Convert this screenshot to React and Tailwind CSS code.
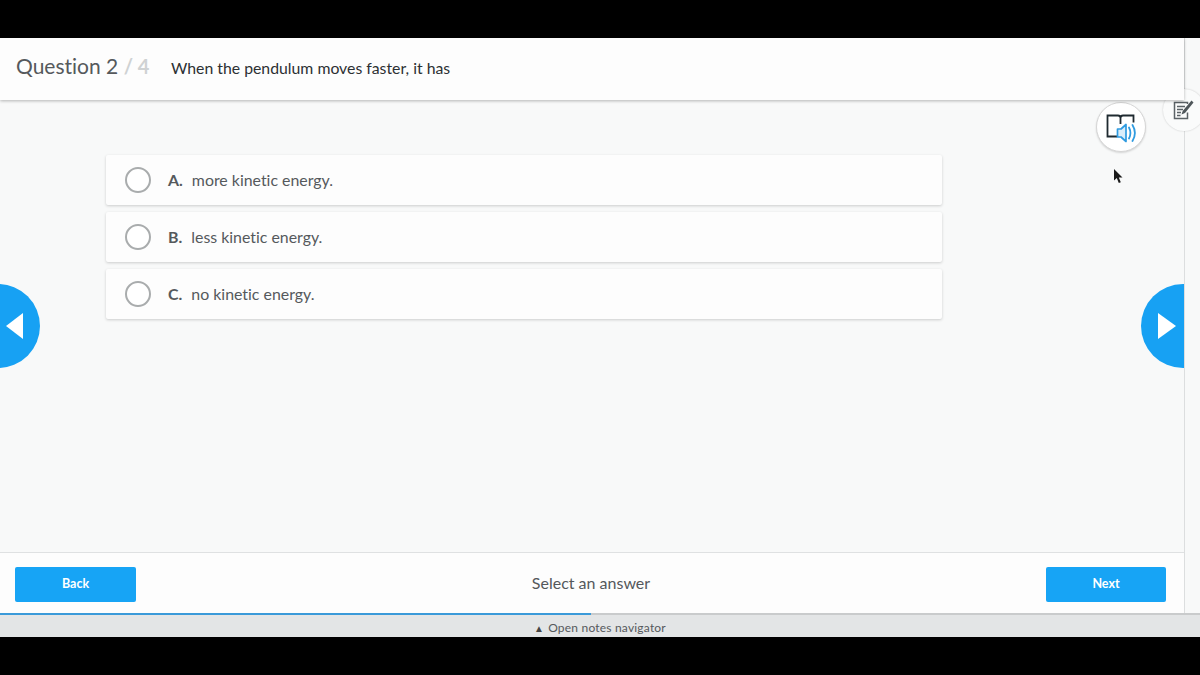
import React from 'react';

const options = [
  { letter: 'A.', text: 'more kinetic energy.' },
  { letter: 'B.', text: 'less kinetic energy.' },
  { letter: 'C.', text: 'no kinetic energy.' },
];

function BookAudioIcon() {
  return (
    <svg width="32" height="32" viewBox="0 0 32 32" fill="none">
      <path d="M12 25.500H2.500V4.500h10.500c1.300 0 2.500 1.200 2.500 2.500M15.500 7C15.500 5.500 16.500 4.500 18 4.500h10.500v7" stroke="#1f2a30" strokeWidth="1.800" />
      <path d="M15.500 7v6" stroke="#1f2a30" strokeWidth="1.800" />
      <path d="M12.500 18h3.500l5-4.500v17l-5-4.500h-3.500z" fill="#d9edfa" stroke="#2f9be0" strokeWidth="1.700" strokeLinejoin="round" />
      <path d="M24 16.500c1.800 3.500 1.800 7.500 0 11M27.500 14c3 5 3 11 0 16" stroke="#2f9be0" strokeWidth="1.800" strokeLinecap="round" />
    </svg>
  );
}

function NotesIcon() {
  return (
    <svg width="22" height="22" viewBox="0 0 22 22" fill="none">
      <path d="M15.500 5V3.500H2.500v16h13v-6" stroke="#5b6266" strokeWidth="1.500" />
      <path d="M5 7.500h8M5 10.500h6M5 13.500h4M5 16.500h3.500" stroke="#5b6266" strokeWidth="1.400" />
      <path d="M9.500 15.500l1.200-3.500L19.500 1.500l2 2-8.500 10.500z" fill="#4f565a" />
    </svg>
  );
}

export default function App() {
  return (
    <div className="relative h-[675px] w-[1200px] overflow-hidden bg-black font-['Lato',sans-serif] [font-variant-ligatures:none]">
      <div className="h-[38px]" />

      <div className="flex h-[575px]">
        <div className="flex w-[1184px] flex-col">
          <header className="z-10 flex h-[62px] items-center bg-[#fdfdfd] pl-[16px] shadow-[0_1px_3px_rgba(0,0,0,0.28)]">
            <h1 className="w-[155px] pb-[6px] text-[21px] text-[#55595c]">
              Question 2 <span className="text-[20px] font-bold text-[#cfd2d3]">/ 4</span>
            </h1>
            <p className="pb-[2px] text-[15.800px] text-[#2c3033]">When the pendulum moves faster, it has</p>
          </header>

          <main className="flex flex-1 flex-col gap-[7px] bg-[#f8f9f9] pl-[106px] pt-[55px]">
            {options.map((option) => (
              <div
                key={option.letter}
                className="flex h-[50px] w-[836px] items-center rounded-[2px] bg-[#fdfdfd] pl-[19px] text-[15.900px] text-[#55595c] shadow-[0_1px_3px_rgba(0,0,0,0.18)]"
              >
                <span className="h-[26px] w-[26px] rounded-full border-2 border-[#a9acad] bg-white" />
                <span className="ml-[17px] font-bold">{option.letter}</span>
                <span className="ml-[9px]">{option.text}</span>
              </div>
            ))}
          </main>

          <footer className="flex h-[61px] items-center justify-between border-t border-[#dfe1e2] bg-[#fdfdfd] pl-[15px] pr-[18px] pt-[2px]">
            <button className="h-[35px] w-[121px] rounded-[2px] bg-[#17a4f5] text-[12.500px] font-bold text-white">Back</button>
            <span className="pb-[3px] text-[16px] text-[#54585b]">Select an answer</span>
            <button className="h-[35px] w-[120px] rounded-[2px] bg-[#17a4f5] text-[12.500px] font-bold text-white">Next</button>
          </footer>
        </div>
        <div className="w-[16px] border-l border-[#dcdedf] bg-[#f8f9f9]" />
      </div>

      <div className="h-[24px] w-[1200px] bg-[#e3e5e6]">
        <div className="h-[2px] w-full bg-[#c9cbcc]">
          <div className="h-[2px] w-[591px] bg-[#3a9ad9]" />
        </div>
        <div className="flex h-[22px] items-center justify-center gap-[4px] pt-[4px] text-[12px] tracking-[0.2px] text-[#55595c]">
          <span className="text-[10px] text-[#444]">▲</span>
          <span>Open notes navigator</span>
        </div>
      </div>

      <div className="absolute left-[-44px] top-[284px] flex h-[84px] w-[84px] items-center justify-end rounded-full bg-[#17a1f3] pr-[17px]">
        <span className="h-0 w-0 border-y-[13px] border-r-[17px] border-y-transparent border-r-white" />
      </div>
      <div className="absolute left-[1141px] top-[284px] h-[84px] w-[43px] overflow-hidden">
        <div className="flex h-[84px] w-[84px] items-center rounded-full bg-[#17a1f3] pl-[17px]">
          <span className="h-0 w-0 border-y-[13px] border-l-[18px] border-y-transparent border-l-white" />
        </div>
      </div>

      <div className="absolute left-[1108px] top-[51px] flex h-[24px] w-[24px] items-center justify-center rounded-full bg-[#14262f]">
        <svg width="14" height="10" viewBox="0 0 14 10" fill="none">
          <path d="M2 2.500l5 5 5-5" stroke="white" strokeWidth="2.500" strokeLinecap="round" strokeLinejoin="round" />
        </svg>
      </div>

      <div className="absolute left-[1096px] top-[102px] flex h-[50px] w-[50px] items-center justify-center rounded-full border border-[#d6d6d6] bg-white shadow-[0_1px_2px_rgba(0,0,0,0.15)]">
        <BookAudioIcon />
      </div>

      <div className="absolute left-[1163px] top-[89px] flex h-[42px] w-[42px] items-center rounded-full bg-[#fafbfb] pl-[9px] shadow-[0_0_2px_rgba(0,0,0,0.2)]">
        <NotesIcon />
      </div>

      <svg className="absolute left-[1112px] top-[168px]" width="12" height="17" viewBox="0 0 12 17">
        <path d="M2 1v11.500l2.800-2.500 2 5 2-.8-2-4.800H10.500z" fill="#1a1a1a" />
      </svg>
    </div>
  );
}
